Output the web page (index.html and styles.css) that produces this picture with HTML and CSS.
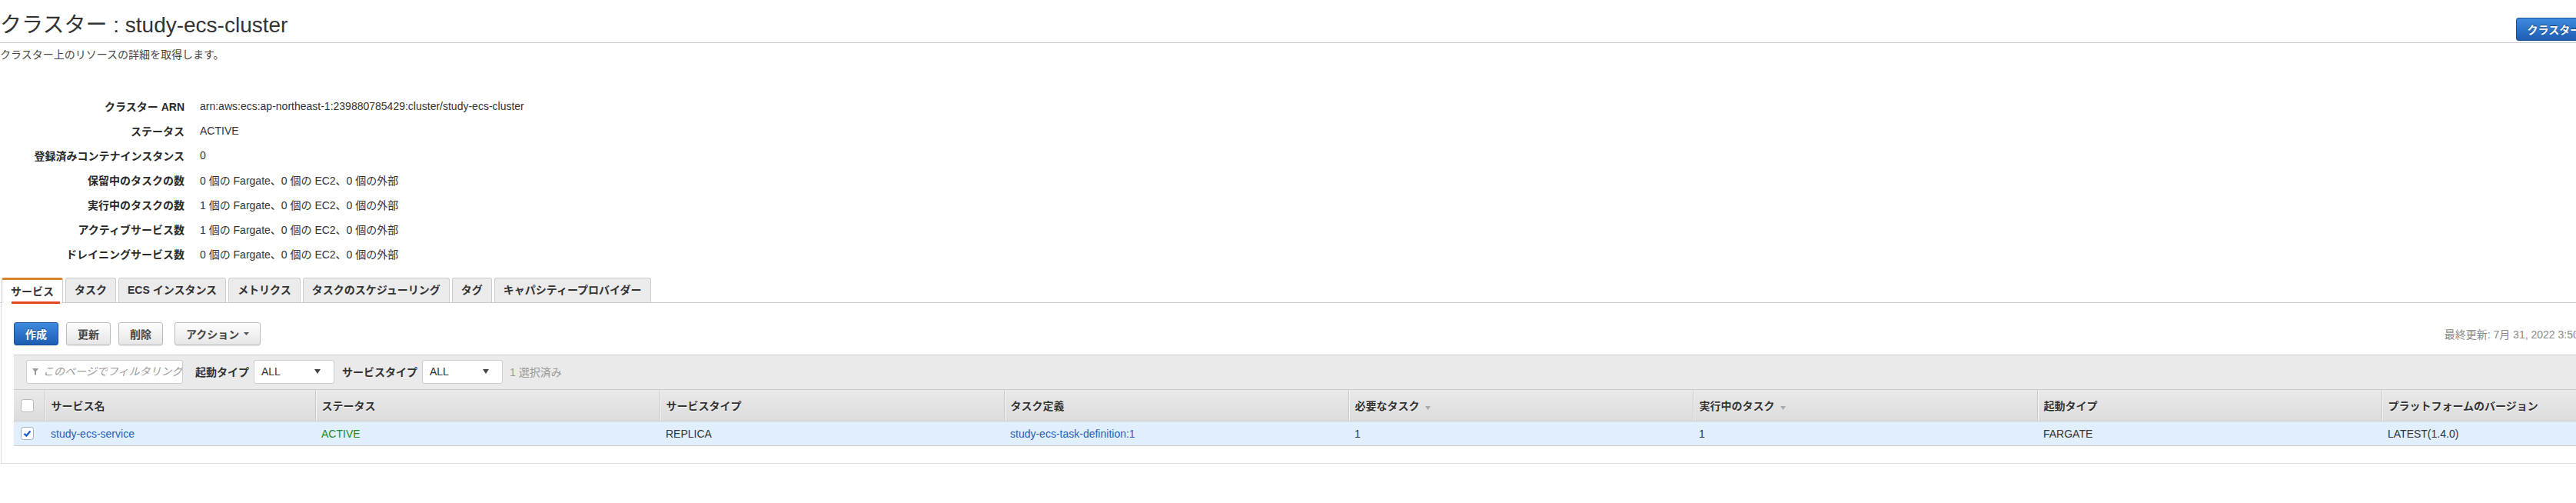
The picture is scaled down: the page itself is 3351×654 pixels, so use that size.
FILE: index.html
```html
<!DOCTYPE html>
<html lang="ja">
<head>
    <meta charset="UTF-8">
    <title>クラスター : study-ecs-cluster</title>
    <link rel="stylesheet" href="styles.css">
</head>
<body>
    <div id="page">
        <div id="header">
            <h1>クラスター : study-ecs-cluster</h1>
            <div class="headerButtons">
                <button class="btn primary">クラスターの更新</button>
                <button class="btn">クラスターの削除</button>
            </div>
        </div>
        <p class="lead">クラスター上のリソースの詳細を取得します。</p>

        <dl id="details">
            <dt>クラスター ARN</dt>
            <dd>arn:aws:ecs:ap-northeast-1:239880785429:cluster/study-ecs-cluster</dd>
            <dt>ステータス</dt>
            <dd class="ok">ACTIVE</dd>
            <dt>登録済みコンテナインスタンス</dt>
            <dd>0</dd>
            <dt>保留中のタスクの数</dt>
            <dd>0 個の Fargate、0 個の EC2、0 個の外部</dd>
            <dt>実行中のタスクの数</dt>
            <dd>1 個の Fargate、0 個の EC2、0 個の外部</dd>
            <dt>アクティブサービス数</dt>
            <dd>1 個の Fargate、0 個の EC2、0 個の外部</dd>
            <dt>ドレイニングサービス数</dt>
            <dd>0 個の Fargate、0 個の EC2、0 個の外部</dd>
        </dl>

        <div id="tabs">
            <div class="tab active">サービス</div>
            <div class="tab">タスク</div>
            <div class="tab">ECS インスタンス</div>
            <div class="tab">メトリクス</div>
            <div class="tab">タスクのスケジューリング</div>
            <div class="tab">タグ</div>
            <div class="tab">キャパシティープロバイダー</div>
        </div>

        <div id="panel">
            <div class="toolbar">
                <button class="btn primary">作成</button>
                <button class="btn">更新</button>
                <button class="btn">削除</button>
                <button class="btn action">アクション
                    <svg width="7" height="4" viewBox="0 0 7 4"><path d="M0 0H7L3.5 4Z" fill="#555"/></svg>
                </button>
                <span class="updated">最終更新: 7月 31, 2022 3:50:37 PM (0m ago)</span>
            </div>

            <div class="filterBar">
                <div class="filterInput">
                    <svg width="8" height="9" viewBox="0 0 8 9"><path d="M0 0H8L5 4V9L3 8V4Z" fill="#999"/></svg>
                    <input type="text" placeholder="このページでフィルタリング">
                </div>
                <span class="filterLabel">起動タイプ</span>
                <div class="select">
                    <span>ALL</span>
                    <svg width="8" height="6" viewBox="0 0 8 6"><path d="M0 0H8L4 6Z" fill="#444"/></svg>
                </div>
                <span class="filterLabel">サービスタイプ</span>
                <div class="select">
                    <span>ALL</span>
                    <svg width="8" height="6" viewBox="0 0 8 6"><path d="M0 0H8L4 6Z" fill="#444"/></svg>
                </div>
                <span class="selected">1 選択済み</span>
            </div>

            <table class="grid">
                <colgroup>
                    <col class="colCheck">
                    <col class="colName">
                    <col class="colWide">
                    <col class="colWide">
                    <col class="colWide">
                    <col class="colWide">
                    <col class="colWide">
                    <col class="colWide">
                    <col>
                </colgroup>
                <thead>
                    <tr>
                        <th class="check">
                            <svg width="17" height="17" viewBox="0 0 17 17"><rect x="0.5" y="0.5" width="16" height="16" rx="3" fill="#fff" stroke="#b8b8b8"/></svg>
                        </th>
                        <th>サービス名</th>
                        <th>ステータス</th>
                        <th>サービスタイプ</th>
                        <th>タスク定義</th>
                        <th>必要なタスク <svg class="sort" width="7" height="5" viewBox="0 0 7 5"><path d="M0 0H7L3.5 5Z" fill="#aaa"/></svg></th>
                        <th>実行中のタスク <svg class="sort" width="7" height="5" viewBox="0 0 7 5"><path d="M0 0H7L3.5 5Z" fill="#aaa"/></svg></th>
                        <th>起動タイプ</th>
                        <th>プラットフォームのバージョン</th>
                    </tr>
                </thead>
                <tbody>
                    <tr class="picked">
                        <td class="check">
                            <svg width="17" height="17" viewBox="0 0 17 17"><rect x="0.5" y="0.5" width="16" height="16" rx="3" fill="#fff" stroke="#9fb0c6"/><path d="M4.5 8.8L7.3 11.5L12.5 5.5" fill="none" stroke="#1a5fc6" stroke-width="2.4"/></svg>
                        </td>
                        <td><a href="#">study-ecs-service</a></td>
                        <td class="ok">ACTIVE</td>
                        <td>REPLICA</td>
                        <td><a href="#">study-ecs-task-definition:1</a></td>
                        <td>1</td>
                        <td>1</td>
                        <td>FARGATE</td>
                        <td>LATEST(1.4.0)</td>
                    </tr>
                </tbody>
            </table>
        </div>
    </div>
</body>
</html>
```

FILE: styles.css
```css
html, body {
    overflow: hidden;
}
body {
    margin: 0;
    font-family: 'Liberation Sans', 'Noto Sans CJK JP', sans-serif;
    font-size: 14px;
    color: #333;
    background: #fff;
}
#page {
    width: 3580px;
}
#header {
    display: flex;
    align-items: flex-end;
    justify-content: space-between;
    height: 55px;
    padding-right: 19px;
    border-bottom: 1px solid #ccc;
}
h1 {
    margin: 0 0 2px 0;
    font-size: 28px;
    font-weight: normal;
    line-height: 40px;
    color: #333;
}
.headerButtons {
    display: flex;
    gap: 5px;
    margin-bottom: 2px;
}
.lead {
    margin: 5px 0 0 0;
    line-height: 20px;
    color: #444;
}
#details {
    display: grid;
    grid-template-columns: 240px auto;
    grid-auto-rows: 32px;
    column-gap: 20px;
    align-items: center;
    margin: 41px 0 0 0;
}
#details dt {
    text-align: right;
    font-weight: bold;
    color: #2a2a2a;
}
#details dd {
    margin: 0;
    color: #333;
}
.ok {
    color: #1d8a1d;
}

/* tabs */
#tabs {
    display: flex;
    margin-top: 15px;
    padding-left: 2px;
    border-bottom: 1px solid #ccc;
}
.tab {
    position: relative;
    height: 31px;
    line-height: 31px;
    padding: 0 11px;
    margin-right: 3px;
    font-weight: bold;
    color: #333;
    background: #ebebeb;
    border: 1px solid #ccc;
    border-bottom: none;
    border-radius: 3px 3px 0 0;
}
.tab.active {
    height: 30px;
    line-height: 30px;
    margin-bottom: -1px;
    background: #fff;
    border-top: 3px solid #d9822b;
}
.tab.active::after {
    content: '';
    position: absolute;
    left: 12px;
    right: 3px;
    bottom: -1px;
    height: 3px;
    background: #e8431f;
}

/* panel */
#panel {
    margin-left: 1px;
    padding: 25px 0 22px 16px;
    border-left: 1px solid #ddd;
    border-bottom: 1px solid #ddd;
}
.toolbar {
    display: flex;
    align-items: center;
    height: 30px;
}
.toolbar .btn {
    margin-right: 10px;
}
.toolbar .action {
    margin-left: 5px;
    display: flex;
    align-items: center;
    gap: 6px;
}
.updated {
    margin-left: auto;
    margin-right: 121px;
    color: #888;
}
.btn {
    height: 30px;
    padding: 0 14px;
    font-family: inherit;
    font-size: 14px;
    font-weight: bold;
    color: #444;
    background: linear-gradient(#fdfdfd, #e6e6e6);
    border: 1px solid #bbb;
    border-radius: 3px;
    box-shadow: 0 1px 1px rgba(0, 0, 0, 0.08);
    cursor: pointer;
}
.btn.primary {
    color: #fff;
    background: linear-gradient(#3d8be0, #1d5cb1);
    border-color: #1a4f97;
    text-shadow: 0 -1px 0 rgba(0, 0, 0, 0.45);
}

/* filter */
.filterBar {
    display: flex;
    align-items: center;
    margin-top: 12px;
    padding: 0 16px 2px 16px;
    box-sizing: border-box;
    height: 46px;
    background: #eaeaea;
    border-top: 1px solid #ccc;
    border-bottom: 1px solid #ccc;
}
.filterInput {
    display: flex;
    align-items: center;
    gap: 6px;
    width: 204px;
    height: 31px;
    box-sizing: border-box;
    padding-left: 7px;
    background: #fff;
    border: 1px solid #ccc;
    border-radius: 3px;
    overflow: hidden;
}
.filterInput input {
    flex: 1;
    min-width: 0;
    border: none;
    outline: none;
    padding: 0;
    font-family: inherit;
    font-size: 14px;
    background: transparent;
}
.filterInput input::placeholder {
    color: #9a9a9a;
    font-style: italic;
}
.filterLabel {
    margin-left: 16px;
    margin-right: 6px;
    font-weight: bold;
    color: #333;
}
.filterLabel + .select + .filterLabel {
    margin-left: 10px;
}
.select {
    display: flex;
    align-items: center;
    justify-content: space-between;
    width: 105px;
    height: 31px;
    box-sizing: border-box;
    padding: 0 17px 0 9px;
    background: #fff;
    border: 1px solid #ccc;
    border-radius: 3px;
}
.selected {
    margin-left: 9px;
    color: #999;
}

/* table */
.grid {
    width: 100%;
    border-collapse: collapse;
    table-layout: fixed;
}
.colCheck { width: 40px; }
.colName { width: 352px; }
.colWide { width: 448px; }
.grid th {
    height: 40px;
    padding: 0 8px;
    text-align: left;
    font-weight: bold;
    color: #333;
    text-shadow: 0 1px 0 #fff;
    background: linear-gradient(#e9e9e9, #dcdcdc);
    border-bottom: 1px solid #ccc;
    border-left: 1px solid #c9c9c9;
    box-shadow: inset 1px 0 0 #f6f6f6;
    white-space: nowrap;
}
.grid th.check {
    border-left: none;
    box-shadow: none;
}
.grid .check {
    padding: 0 0 0 9px;
}
.grid .check svg {
    display: block;
}
.grid .sort {
    margin-left: 4px;
}
.grid td {
    height: 31px;
    padding: 0 8px;
    border-bottom: 1px solid #ccc;
    white-space: nowrap;
}
.picked td {
    background: #e1eefc;
}
.grid a {
    color: #1f5fbb;
    text-decoration: none;
}
```
